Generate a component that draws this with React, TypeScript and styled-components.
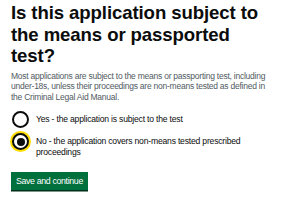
import React, { useState } from 'react';
import styled, { createGlobalStyle } from 'styled-components';

const GlobalStyle = createGlobalStyle`
  html, body {
    margin: 0;
    padding: 0;
    background: #ffffff;
  }
  body {
    font-family: "Liberation Sans", Arial, sans-serif;
    color: #0b0c0c;
  }
`;

const Page = styled.main`
  width: 300px;
  height: 200px;
  box-sizing: border-box;
  padding: 2px 10px 0 11px;
  overflow: hidden;
`;

const Heading = styled.h1`
  margin: 0 0 4px;
  max-width: 258px;
  font-size: 18.6px;
  line-height: 21.5px;
  font-weight: 700;
  letter-spacing: -0.1px;
  color: #0b0c0c;
`;

const Hint = styled.p`
  margin: 0 0 9px;
  max-width: 265px;
  font-size: 8.5px;
  line-height: 10.5px;
  letter-spacing: -0.24px;
  color: #505a5f;
`;

const Options = styled.div`
  display: flex;
  flex-direction: column;
  gap: 5px;
`;

const Option = styled.label`
  display: flex;
  align-items: flex-start;
  gap: 7px;
  cursor: pointer;
`;

const Circle = styled.span<{ $checked: boolean }>`
  flex: none;
  width: 17px;
  height: 17px;
  box-sizing: border-box;
  border-radius: 50%;
  border: 2px solid #0b0c0c;
  background: #fff;
  display: flex;
  align-items: center;
  justify-content: center;
  margin-left: 1px;
  ${({ $checked }) => $checked && `
    box-shadow: 0 0 0 2px #ffdd00;
    border-width: 2.5px;
  `}
`;

const Dot = styled.span`
  width: 8px;
  height: 8px;
  border-radius: 50%;
  background: #0b0c0c;
`;

const OptionText = styled.span`
  font-size: 8.6px;
  line-height: 10.5px;
  letter-spacing: -0.2px;
  padding-top: 3px;
  max-width: 205px;
  color: #0b0c0c;
`;

const Button = styled.button`
  margin-top: 15px;
  font-family: inherit;
  font-size: 8.8px;
  line-height: 1;
  letter-spacing: -0.35px;
  color: #fff;
  background: #00703c;
  border: 0;
  border-radius: 0;
  padding: 5px 5px 4px;
  box-shadow: 0 1.5px 0 #002d18;
  cursor: pointer;
`;

const choices = [
  { id: 'yes', label: 'Yes - the application is subject to the test' },
  { id: 'no', label: 'No - the application covers non-means tested prescribed proceedings' },
];

const App = () => {
  const [selected, setSelected] = useState('no');

  return (
    <>
      <GlobalStyle />
      <Page>
        <Heading>Is this application subject to the means or passported test?</Heading>
        <Hint>
          Most applications are subject to the means or passporting test, including under-18s, unless
          their proceedings are non-means tested as defined in the Criminal Legal Aid Manual.
        </Hint>
        <Options>
          {choices.map((c) => (
            <Option key={c.id} onClick={() => setSelected(c.id)}>
              <Circle $checked={selected === c.id}>{selected === c.id && <Dot />}</Circle>
              <OptionText>{c.label}</OptionText>
            </Option>
          ))}
        </Options>
        <Button>Save and continue</Button>
      </Page>
    </>
  );
};

export default App;
